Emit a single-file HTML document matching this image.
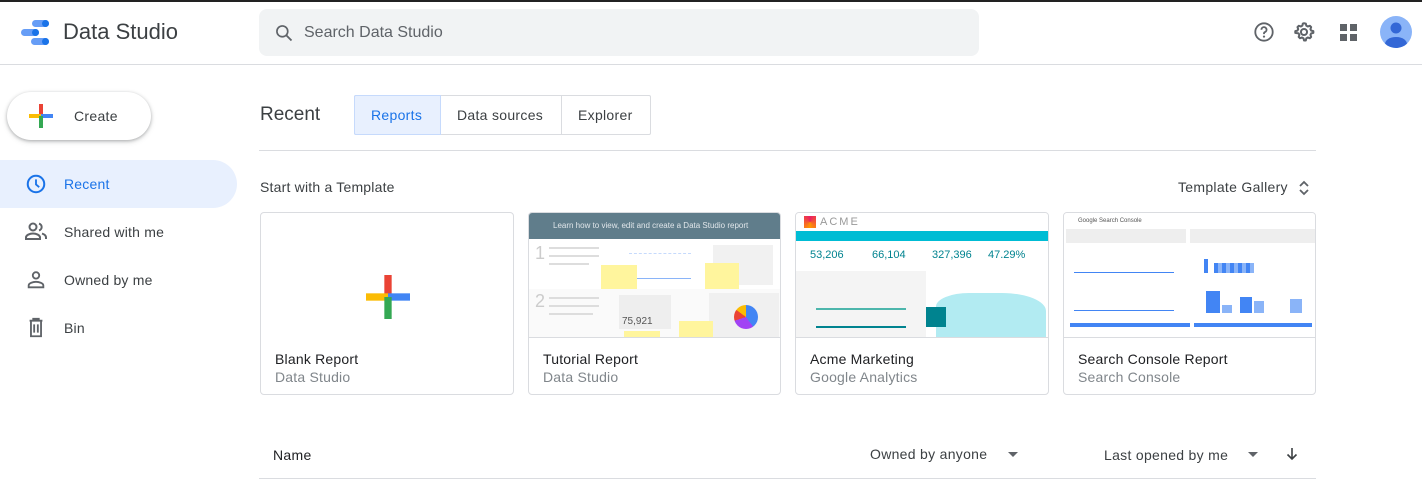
<!DOCTYPE html>
<html><head><style>
*{box-sizing:border-box;margin:0;padding:0}
body{width:1422px;height:483px;overflow:hidden;background:#fff;font-family:"Liberation Sans",Arial,sans-serif;color:#3c4043;position:relative}
.a{position:absolute}
.t{position:absolute;white-space:nowrap}
.card{position:absolute;top:212px;height:183px;border:1px solid #dadce0;border-radius:4px;overflow:hidden;background:#fff}
.thumb{position:absolute;left:0;top:0;right:0;height:125px;border-bottom:1px solid #dadce0;overflow:hidden}
.ct{position:absolute;left:14px;top:138px;font-size:14px;color:#202124;letter-spacing:.2px}
.cs{position:absolute;left:14px;top:156px;font-size:14px;color:#80868b;letter-spacing:.2px}
.nav{position:absolute;left:64px;font-size:14px;color:#3c4043;letter-spacing:.2px}
.ln{position:absolute;height:2px;background:#ddd}
</style></head><body>
<div class="a" style="left:0;top:0;width:1422px;height:2px;background:#222"></div>
<div class="a" style="left:0;top:64px;width:1422px;height:1px;background:#dadce0"></div>
<svg class="a" style="left:20px;top:19px" width="30" height="28" viewBox="0 0 30 28">
<rect x="12" y="1" width="17" height="7" rx="3.5" fill="#669df6"/><circle cx="25.5" cy="4.5" r="3.5" fill="#1a73e8"/>
<rect x="1" y="10" width="18" height="7" rx="3.5" fill="#669df6"/><circle cx="15.5" cy="13.5" r="3.5" fill="#1a73e8"/>
<rect x="11" y="19" width="18" height="7" rx="3.5" fill="#669df6"/><circle cx="25.5" cy="22.5" r="3.5" fill="#1a73e8"/>
</svg>
<div class="t" style="left:63px;top:19px;font-size:22px;color:#3c4043">Data Studio</div>
<div class="a" style="left:259px;top:9px;width:720px;height:47px;background:#f1f3f4;border-radius:8px"></div>
<svg class="a" style="left:274px;top:23px" width="20" height="20" viewBox="0 0 24 24"><circle cx="10" cy="10" r="6.5" fill="none" stroke="#5f6368" stroke-width="2"/><path d="M15 15l6 6" stroke="#5f6368" stroke-width="2.2"/></svg>
<div class="t" style="left:304px;top:24px;font-size:16px;color:#5f6368">Search Data Studio</div>
<svg class="a" style="left:1253px;top:21px" width="22" height="22" viewBox="0 0 24 24"><circle cx="12" cy="12" r="9.5" fill="none" stroke="#5f6368" stroke-width="2"/><path d="M9.2 9.5a2.8 2.8 0 1 1 3.8 2.6c-.7.3-1 .9-1 1.6v.6" fill="none" stroke="#5f6368" stroke-width="2"/><circle cx="12" cy="17" r="1.2" fill="#5f6368"/></svg>
<svg class="a" style="left:1293px;top:21px" width="22" height="22" viewBox="0 0 24 24"><path d="M12 2.5l2 .3.5 2.3 1.6.9 2.2-.8 1.5 1.5-.8 2.2.9 1.6 2.3.5v2l-2.3.5-.9 1.6.8 2.2-1.5 1.5-2.2-.8-1.6.9-.5 2.3h-2l-.5-2.3-1.6-.9-2.2.8-1.5-1.5.8-2.2-.9-1.6L2.5 13v-2l2.3-.5.9-1.6-.8-2.2 1.5-1.5 2.2.8 1.6-.9.5-2.3z" fill="none" stroke="#5f6368" stroke-width="2.2" stroke-linejoin="round"/><circle cx="12" cy="12" r="3.3" fill="none" stroke="#5f6368" stroke-width="2.2"/></svg>
<div class="a" style="left:1340px;top:24px;width:7px;height:7px;background:#5f6368"></div>
<div class="a" style="left:1350px;top:24px;width:7px;height:7px;background:#5f6368"></div>
<div class="a" style="left:1340px;top:34px;width:7px;height:7px;background:#5f6368"></div>
<div class="a" style="left:1350px;top:34px;width:7px;height:7px;background:#5f6368"></div>
<svg class="a" style="left:1380px;top:16px" width="32" height="32" viewBox="0 0 32 32"><clipPath id="c"><circle cx="16" cy="16" r="16"/></clipPath><circle cx="16" cy="16" r="16" fill="#8ab4f8"/><g clip-path="url(#c)" fill="#3367d6"><circle cx="16" cy="12" r="5.5"/><ellipse cx="16" cy="28" rx="11" ry="7"/></g></svg>
<div class="a" style="left:7px;top:92px;width:144px;height:48px;border-radius:24px;background:#fff;box-shadow:0 1px 3px rgba(60,64,67,.35),0 2px 6px rgba(60,64,67,.15)"></div>
<svg class="a" style="left:29px;top:104px" width="24" height="24" viewBox="0 0 24 24"><rect x="10" y="0" width="4" height="12" fill="#ea4335"/><rect x="0" y="10" width="12" height="4" fill="#fbbc04"/><rect x="12" y="10" width="12" height="4" fill="#4285f4"/><rect x="10" y="12" width="4" height="12" fill="#34a853"/></svg>
<div class="t" style="left:74px;top:108px;font-size:14px;color:#3c4043;letter-spacing:.3px">Create</div>
<div class="a" style="left:0;top:160px;width:237px;height:48px;background:#e8f0fe;border-radius:0 24px 24px 0"></div>
<svg class="a" style="left:25px;top:173px" width="22" height="22" viewBox="0 0 24 24"><circle cx="12" cy="12" r="9" fill="none" stroke="#1a73e8" stroke-width="2.2"/><path d="M12 7v5.5l3.5 3" fill="none" stroke="#1a73e8" stroke-width="2"/></svg>
<div class="nav" style="top:176px;color:#1a73e8">Recent</div>
<svg class="a" style="left:24px;top:221px" width="24" height="22" viewBox="0 0 24 22"><circle cx="9" cy="6" r="3.5" fill="none" stroke="#5f6368" stroke-width="2"/><path d="M2 18v-1.5c0-2.5 4-4 7-4s7 1.5 7 4V18z" fill="none" stroke="#5f6368" stroke-width="2"/><path d="M15 2.6a3.5 3.5 0 0 1 0 6.8M18 12.6c2 .6 4 1.8 4 3.9V18" fill="none" stroke="#5f6368" stroke-width="2"/></svg>
<div class="nav" style="top:224px">Shared with me</div>
<svg class="a" style="left:25px;top:269px" width="22" height="22" viewBox="0 0 24 24"><circle cx="12" cy="7" r="3.5" fill="none" stroke="#5f6368" stroke-width="2"/><path d="M4 20v-2c0-2.7 5-4 8-4s8 1.3 8 4v2z" fill="none" stroke="#5f6368" stroke-width="2"/></svg>
<div class="nav" style="top:272px">Owned by me</div>
<svg class="a" style="left:25px;top:317px" width="22" height="22" viewBox="0 0 24 24"><path d="M5 4h14M9 4V2h6v2M6.5 4v17h11V4M10 8v9M14 8v9" fill="none" stroke="#5f6368" stroke-width="2"/></svg>
<div class="nav" style="top:320px">Bin</div>
<div class="t" style="left:260px;top:104px;font-size:19px;color:#3c4043">Recent</div>
<div class="a" style="left:354px;top:95px;width:297px;height:40px;border:1px solid #dadce0;border-radius:2px"></div>
<div class="a" style="left:354px;top:95px;width:87px;height:40px;background:#e8f0fe;border:1px solid #c6dafc;border-radius:2px 0 0 2px"></div>
<div class="a" style="left:561px;top:95px;width:1px;height:40px;background:#dadce0"></div>
<div class="t" style="left:371px;top:107px;font-size:14px;color:#1a73e8;letter-spacing:.3px">Reports</div>
<div class="t" style="left:457px;top:107px;font-size:14px;color:#3c4043;letter-spacing:.3px">Data sources</div>
<div class="t" style="left:578px;top:107px;font-size:14px;color:#3c4043;letter-spacing:.3px">Explorer</div>
<div class="a" style="left:259px;top:150px;width:1057px;height:1px;background:#dadce0"></div>
<div class="t" style="left:260px;top:179px;font-size:14px;color:#3c4043;letter-spacing:.2px">Start with a Template</div>
<div class="t" style="left:1178px;top:179px;font-size:14px;color:#3c4043;letter-spacing:.3px">Template Gallery</div>
<svg class="a" style="left:1298px;top:180px" width="12" height="16" viewBox="0 0 12 16"><path d="M2 6l4-4 4 4M2 10l4 4 4-4" fill="none" stroke="#5f6368" stroke-width="1.8"/></svg>
<div class="card" style="left:260px;width:254px">
<svg class="a" style="left:105px;top:62px" width="44" height="44" viewBox="0 0 24 24"><rect x="10" y="0" width="4" height="12" fill="#ea4335"/><rect x="0" y="10" width="12" height="4" fill="#fbbc04"/><rect x="12" y="10" width="12" height="4" fill="#4285f4"/><rect x="10" y="12" width="4" height="12" fill="#34a853"/></svg>
<div class="ct">Blank Report</div><div class="cs">Data Studio</div></div>
<div class="card" style="left:528px;width:253px">
<div class="thumb" style="background:#fafafa">
<div class="a" style="left:0;top:0;width:253px;height:26px;background:#607d8b"></div>
<div class="t" style="left:24px;top:8px;font-size:8px;color:#e0e6ea">Learn how to view, edit and create a Data Studio report</div>
<div class="a" style="left:0;top:26px;width:253px;height:50px;background:#fff"></div>
<div class="t" style="left:6px;top:30px;font-size:18px;color:#ccc">1</div>
<div class="t" style="left:6px;top:78px;font-size:18px;color:#ccc">2</div>
<div class="ln" style="left:20px;top:34px;width:50px"></div><div class="ln" style="left:20px;top:42px;width:50px"></div><div class="ln" style="left:20px;top:50px;width:40px"></div>
<div class="ln" style="left:20px;top:84px;width:50px"></div><div class="ln" style="left:20px;top:92px;width:50px"></div><div class="ln" style="left:20px;top:100px;width:44px"></div>
<div class="a" style="left:100px;top:40px;width:62px;height:26px;border-bottom:1px solid #8ab4f8;border-top:1px dashed #c6dafc"></div>
<div class="a" style="left:184px;top:32px;width:60px;height:40px;background:#f1f1f1"></div>
<div class="a" style="left:72px;top:52px;width:36px;height:24px;background:#fff59d"></div>
<div class="a" style="left:176px;top:50px;width:34px;height:26px;background:#fff59d"></div>
<div class="a" style="left:90px;top:82px;width:52px;height:34px;background:#eee"></div>
<div class="a" style="left:93px;top:103px;font-size:10px;color:#555">75,921</div>
<div class="a" style="left:180px;top:80px;width:70px;height:45px;background:#f0f0f0"></div>
<div class="a" style="left:205px;top:92px;width:24px;height:24px;border-radius:50%;background:conic-gradient(#4285f4 0 40%,#a142f4 0 70%,#ea4335 0 85%,#fbbc04 0)"></div>
<div class="a" style="left:150px;top:108px;width:34px;height:18px;background:#fff59d"></div>
<div class="a" style="left:95px;top:118px;width:36px;height:10px;background:#fff59d"></div>
</div>
<div class="ct">Tutorial Report</div><div class="cs">Data Studio</div></div>
<div class="card" style="left:795px;width:254px">
<div class="thumb" style="background:#f4f4f4">
<div class="a" style="left:0;top:0;width:254px;height:18px;background:#fff"></div>
<div class="a" style="left:8px;top:3px;width:12px;height:12px;background:conic-gradient(#e91e63,#ff9800,#e91e63)"></div>
<div class="t" style="left:24px;top:3px;font-size:11px;color:#999;letter-spacing:2px">ACME</div>
<div class="a" style="left:0;top:18px;width:254px;height:10px;background:#00bcd4"></div>
<div class="a" style="left:0;top:28px;width:254px;height:30px;background:#fff"></div>
<div class="t" style="left:14px;top:36px;font-size:11px;color:#00838f">53,206</div>
<div class="t" style="left:76px;top:36px;font-size:11px;color:#00838f">66,104</div>
<div class="t" style="left:136px;top:36px;font-size:11px;color:#00838f">327,396</div>
<div class="t" style="left:192px;top:36px;font-size:11px;color:#00838f">47.29%</div>
<div class="a" style="left:130px;top:58px;width:124px;height:67px;background:#fff"></div>
<div class="a" style="left:140px;top:80px;width:110px;height:45px;background:#b2ebf2;border-radius:30% 40% 0 0"></div>
<div class="a" style="left:130px;top:94px;width:20px;height:20px;background:#00838f"></div>
<div class="a" style="left:20px;top:95px;width:90px;height:20px;border-top:2px solid #4db6ac;border-bottom:2px solid #00838f"></div>
</div>
<div class="ct">Acme Marketing</div><div class="cs">Google Analytics</div></div>
<div class="card" style="left:1063px;width:253px">
<div class="thumb" style="background:#fff">
<div class="t" style="left:14px;top:5px;font-size:6px;color:#555">Google Search Console</div>
<div class="a" style="left:2px;top:16px;width:120px;height:14px;background:#eee"></div>
<div class="a" style="left:126px;top:16px;width:125px;height:14px;background:#eee"></div>
<div class="a" style="left:10px;top:48px;width:100px;height:12px;border-bottom:1px solid #4285f4"></div>
<div class="a" style="left:10px;top:92px;width:100px;height:6px;border-bottom:1px solid #4285f4"></div>
<div class="a" style="left:140px;top:46px;width:4px;height:14px;background:#4285f4"></div>
<div class="a" style="left:150px;top:50px;width:40px;height:10px;background:linear-gradient(90deg,#4285f4 50%,#8ab4f8 50%);background-size:8px 10px"></div>
<div class="a" style="left:142px;top:78px;width:14px;height:22px;background:#4285f4"></div>
<div class="a" style="left:158px;top:92px;width:10px;height:8px;background:#8ab4f8"></div>
<div class="a" style="left:176px;top:84px;width:12px;height:16px;background:#4285f4"></div>
<div class="a" style="left:190px;top:88px;width:10px;height:12px;background:#8ab4f8"></div>
<div class="a" style="left:226px;top:86px;width:12px;height:14px;background:#8ab4f8"></div>
<div class="a" style="left:6px;top:110px;width:120px;height:4px;background:#4285f4"></div>
<div class="a" style="left:130px;top:110px;width:118px;height:4px;background:#4285f4"></div>
</div>
<div class="ct">Search Console Report</div><div class="cs">Search Console</div></div>
<div class="t" style="left:273px;top:447px;font-size:14px;color:#202124;letter-spacing:.3px">Name</div>
<div class="t" style="left:870px;top:446px;font-size:14px;color:#3c4043;letter-spacing:.3px">Owned by anyone</div>
<svg class="a" style="left:1008px;top:452px" width="10" height="6"><path d="M0 0h10L5 5z" fill="#5f6368"/></svg>
<div class="t" style="left:1104px;top:447px;font-size:14px;color:#3c4043;letter-spacing:.3px">Last opened by me</div>
<svg class="a" style="left:1248px;top:452px" width="10" height="6"><path d="M0 0h10L5 5z" fill="#5f6368"/></svg>
<svg class="a" style="left:1285px;top:447px" width="14" height="14" viewBox="0 0 14 14"><path d="M7 1v11M2.5 7.5L7 12l4.5-4.5" fill="none" stroke="#3c4043" stroke-width="1.6"/></svg>
<div class="a" style="left:259px;top:478px;width:1057px;height:1px;background:#dadce0"></div>
</body></html>
